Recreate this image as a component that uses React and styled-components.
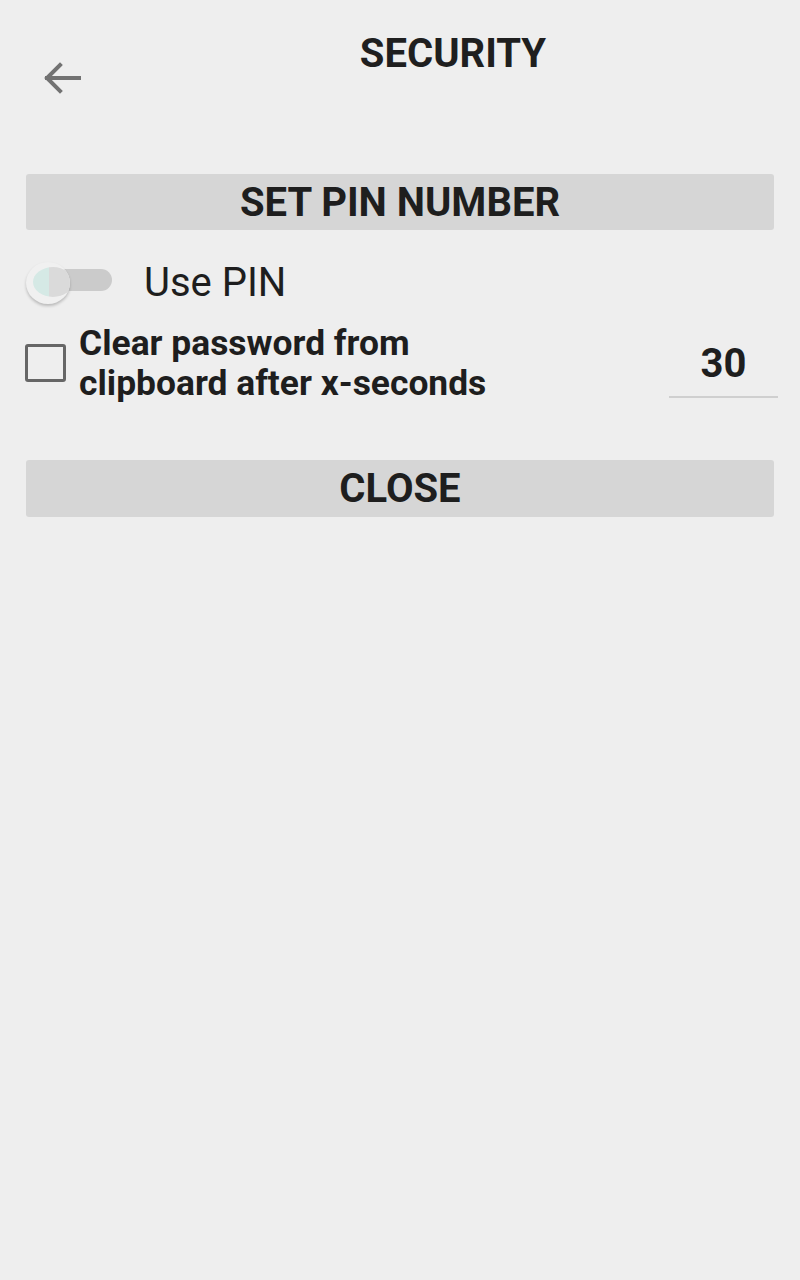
import React from "react";
import styled, { createGlobalStyle } from "styled-components";

const GlobalStyle = createGlobalStyle`
  html, body {
    margin: 0;
    padding: 0;
    background: #eeeeee;
    font-family: Roboto, "Noto Sans", "Liberation Sans", sans-serif;
    color: #1e1e1e;
  }
  * { box-sizing: border-box; }
`;

const Page = styled.div`
  min-height: 1280px;
  background: #eeeeee;
`;

const Header = styled.header`
  display: flex;
  align-items: flex-start;
  height: 174px;
  padding-top: 30px;
`;

const BackButton = styled.button`
  width: 106px;
  padding: 32px 0 0 43px;
  margin: 0;
  border: none;
  background: transparent;
  display: flex;
  cursor: pointer;
`;

const Title = styled.h1`
  flex: 1;
  margin: 0;
  text-align: center;
  font-size: 40px;
  line-height: 47px;
  font-weight: 700;
  color: #1f1f1f;
`;

const Content = styled.main`
  display: flex;
  flex-direction: column;
  padding: 0 22px 0 26px;
`;

const Button = styled.button`
  width: calc(100% - 4px);
  height: ${(p) => p.$h}px;
  margin: ${(p) => p.$mt || 0}px 0 0 0;
  border: none;
  border-radius: 3px;
  background: #d6d6d6;
  font-family: inherit;
  font-size: 40px;
  font-weight: 700;
  color: #1e1e1e;
  display: flex;
  align-items: center;
  justify-content: center;
  padding: 0;
`;

const ToggleRow = styled.div`
  display: flex;
  align-items: center;
  height: 47px;
  margin-top: 29px;
  gap: 32px;
`;

const Switch = styled.div`
  position: relative;
  width: 86px;
  height: 44px;
  flex: none;
`;

const Track = styled.div`
  position: absolute;
  left: 4px;
  right: 0;
  top: 8px;
  height: 22px;
  border-radius: 11px;
  background: #cbcbcb;
`;

const Thumb = styled.div`
  position: absolute;
  left: 0;
  top: 1px;
  width: 44px;
  height: 42px;
  border-radius: 50%;
  background: #f0f0f0;
  box-shadow: 0 2px 3px rgba(0, 0, 0, 0.22);
  overflow: hidden;
  &::after {
    content: "";
    position: absolute;
    left: 7px;
    top: 5px;
    width: 40px;
    height: 30px;
    border-radius: 50%;
    background: linear-gradient(to right, #d5e9e5 0 40%, #dadada 40% 100%);
  }
`;

const ToggleLabel = styled.span`
  font-size: 40px;
  line-height: 47px;
  font-weight: 400;
  color: #1e1e1e;
`;

const CheckRow = styled.div`
  display: flex;
  align-items: center;
  height: 80px;
  margin-top: 17px;
`;

const CheckBox = styled.div`
  flex: none;
  width: 41px;
  height: 38px;
  border: 3px solid #666666;
  border-radius: 3px;
  margin: 0 13px 0 -1px;
`;

const CheckLabel = styled.span`
  flex: 1;
  font-size: 35.4px;
  line-height: 40px;
  font-weight: 700;
  color: #1e1e1e;
`;

const SecondsInput = styled.div`
  flex: none;
  width: 109px;
  height: 70px;
  border-bottom: 2px solid #cfcfcf;
  display: flex;
  align-items: center;
  justify-content: center;
  font-size: 40px;
  font-weight: 700;
  color: #1e1e1e;
  padding-top: 2px;
`;

const ArrowIcon = () => (
  <svg width="38" height="32" viewBox="0 0 38 32" fill="none">
    <path
      d="M37 16H4M17 3L4 16L17 29"
      stroke="#727272"
      strokeWidth="4"
      strokeLinecap="square"
    />
  </svg>
);

export default function App() {
  return (
    <Page>
      <GlobalStyle />
      <Header>
        <BackButton aria-label="Back">
          <ArrowIcon />
        </BackButton>
        <Title>SECURITY</Title>
      </Header>
      <Content>
        <Button $h={56}>SET PIN NUMBER</Button>
        <ToggleRow>
          <Switch>
            <Track />
            <Thumb />
          </Switch>
          <ToggleLabel>Use PIN</ToggleLabel>
        </ToggleRow>
        <CheckRow>
          <CheckBox />
          <CheckLabel>
            Clear password from
            <br />
            clipboard after x-seconds
          </CheckLabel>
          <SecondsInput>30</SecondsInput>
        </CheckRow>
        <Button $h={57} $mt={57}>CLOSE</Button>
      </Content>
    </Page>
  );
}
